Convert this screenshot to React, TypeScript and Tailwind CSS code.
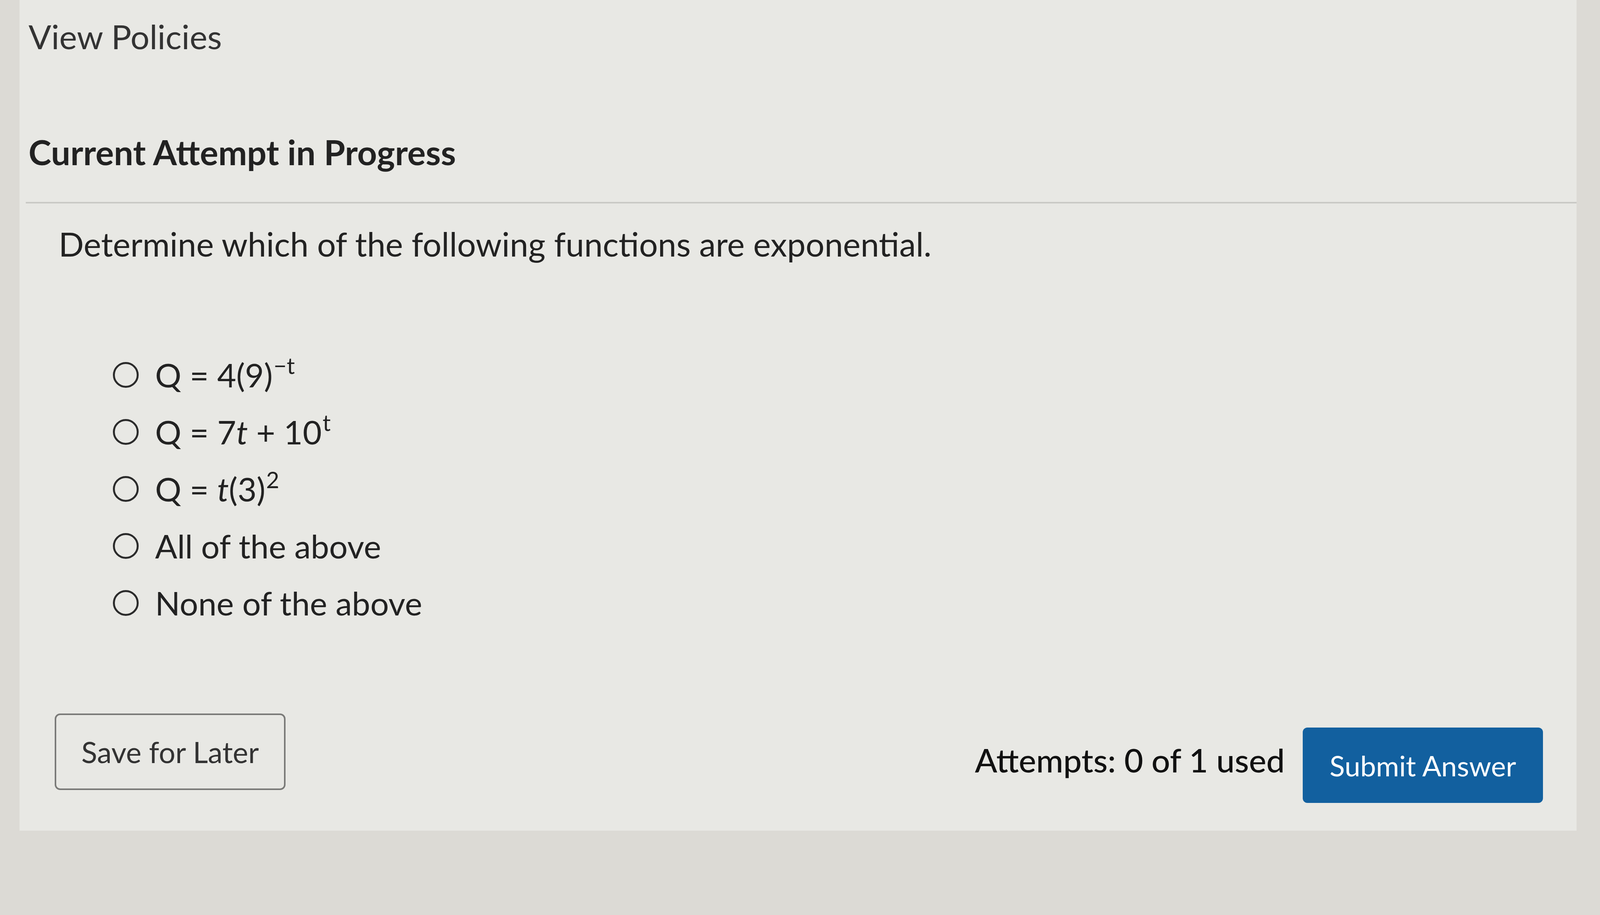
import React from 'react';

const sup = 'text-[58px] relative -top-[34px] ml-[2px]';

const options: React.ReactNode[] = [
  <>Q = 4(9)<sup className={sup}>−t</sup></>,
  <>Q = 7<i>t</i> + 10<sup className={sup}>t</sup></>,
  <>Q = <i>t</i>(3)<sup className={sup}>2</sup></>,
  <>All of the above</>,
  <>None of the above</>,
];

const App: React.FC = () => {
  return (
    <div className="w-full min-h-screen bg-[#dcdad5] font-['Lato','Liberation_Sans',sans-serif] text-[#2b2b2b] overflow-hidden">
      <div className="ml-[50px] mr-[60px] h-[2127px] bg-[#e8e8e4] pl-[23px] pt-[38px]">
        <div className="text-[86px] leading-[110px] text-[#333]">View Policies</div>

        <h2 className="mt-[186px] text-[88px] leading-[110px] font-bold text-[#222]">Current Attempt in Progress</h2>

        <div className="mt-[73px] -ml-[7px] border-t-[4px] border-[#c9c9c5]" />

        <p className="mt-[48px] ml-[77px] text-[85px] leading-[110px] text-[#222]">
          Determine which of the following functions are exponential.
        </p>

        {/* answer choices */}
        <div className="mt-[208px] ml-[216px] flex flex-col">
          {options.map((opt, i) => (
            <label key={i} className="flex items-center h-[146px]">
              <span className="w-[66px] h-[66px] rounded-full border-[5px] border-[#2b2b2b] shrink-0" />
              <span className="ml-[42px] text-[84px] leading-none text-[#222] whitespace-nowrap">{opt}</span>
            </label>
          ))}
        </div>

        <div className="mt-[210px] ml-[67px] mr-[86px] flex items-start">
          <button className="w-[591px] h-[196px] border-[4px] border-[#7a7a78] rounded-[14px] text-[75px] text-[#333]">
            Save for Later
          </button>
          <div className="ml-auto mt-[36px] flex items-center">
            <span className="mb-[28px] text-[84px] font-medium text-[#111] whitespace-nowrap">Attempts: 0 of 1 used</span>
            <button className="ml-[46px] w-[615px] h-[193px] rounded-[12px] bg-[#12609f] text-white text-[72px] whitespace-nowrap">
              Submit Answer
            </button>
          </div>
        </div>
      </div>
    </div>
  );
};

export default App;
